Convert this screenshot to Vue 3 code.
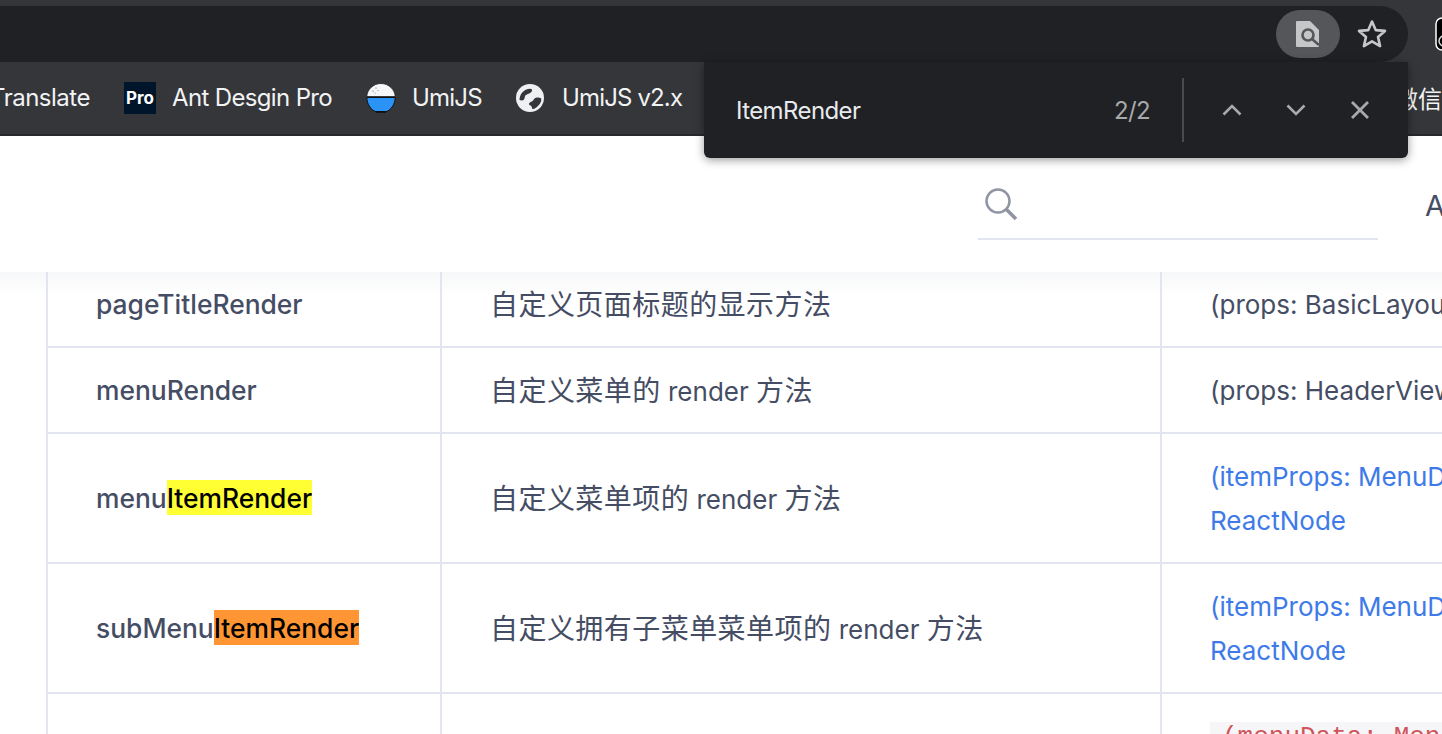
<template>
  <div class="page">
    <div class="tabstrip"></div>
    <div class="toolbar">
      <div class="omnibox">
        <div class="lens">
          <svg width="26" height="28" viewBox="0 0 26 28">
            <path d="M2 1h13l9 9v16a1 1 0 0 1-1 1H2a1 1 0 0 1-1-1V2a1 1 0 0 1 1-1z" fill="#c5c6c8" />
            <circle cx="13" cy="15" r="5.5" fill="none" stroke="#55565a" stroke-width="2.6" />
            <path d="M17 19l7 6" stroke="#55565a" stroke-width="2.6" />
          </svg>
        </div>
        <svg class="star" width="32" height="32" viewBox="0 0 32 32">
          <path d="M16 3.500l3.700 8.600 9.300.8-7 6.100 2.100 9.100-8.100-4.800-8.100 4.800 2.100-9.100-7-6.100 9.300-.8z" fill="none" stroke="#c6c7c9" stroke-width="2.600" stroke-linejoin="round" />
        </svg>
      </div>
      <svg class="ext" width="30" height="34" viewBox="0 0 30 34">
        <rect x="1" y="1" width="28" height="32" rx="6" fill="#000" stroke="#fff" stroke-width="1.500" />
        <circle cx="9" cy="24" r="5" fill="none" stroke="#d8d8d8" stroke-width="1.500" />
      </svg>
    </div>
    <div class="bookmarks">
      <span class="bm translate">Translate</span>
      <span class="bm pro-bm"><span class="pro">Pro</span>Ant Desgin Pro</span>
      <span class="bm umi-bm">
        <svg class="bm-icon" width="30" height="30" viewBox="0 0 30 30">
          <path d="M15 .5C7 .5 1 7 .8 13.500h28.400C29 7 23 .5 15 .5z" fill="#f6f7f8" stroke="#222" stroke-width=".8" />
          <circle cx="10" cy="5" r=".6" fill="#555" /><circle cx="7" cy="8" r=".6" fill="#555" /><circle cx="12" cy="7.500" r=".5" fill="#777" /><circle cx="9" cy="10" r=".5" fill="#777" />
          <path d="M.8 14.500h28.400c0 7-4.700 13-9.200 14.200h-10C5.500 27.500.8 21.500.8 14.500z" fill="#2b92f6" stroke="#111" stroke-width="1" />
          <path d="M10 28h10v1.800H10z" fill="#111" />
        </svg>UmiJS
      </span>
      <span class="bm v2-bm">
        <svg class="bm-icon" width="28" height="28" viewBox="0 0 28 28">
          <circle cx="14" cy="14" r="14" fill="#eff0f1" />
          <path d="M3.500 15.500C3.800 12 5 9.500 7 7.800 9 6 11.500 4.800 14 4.800c1.500 0 2.400.8 2 2-.4 1.500-1.700 2.400-3.500 3-1.500.5-3 1.100-3.500 2.400-.4 1.200-.3 2.600-1.200 3.500-1 1-3 1-4.800-.2z" fill="#35363a" />
          <path d="M13 19.500c.8-1.400 2.400-1.600 3.600-2.500 1.100-.9 1.500-2.500 2.700-3 1.800-.6 4.500-.5 5.700.3.600 1.200.2 3.300-.8 5-1 1.900-2.800 3.500-4.700 4.700-1.200.8-2.600 1.400-3.200.7-.6-.8-.4-2-1.100-2.700-.8-.8-2.700-1-2.200-2.500z" fill="#35363a" />
        </svg>UmiJS v2.x
      </span>
      <span class="bm wechat">微信</span>
    </div>
    <div class="divider"></div>
    <header class="site-header">
      <div class="search">
        <svg width="34" height="34" viewBox="0 0 34 34">
          <circle cx="13" cy="13" r="11.500" fill="none" stroke="#9095a3" stroke-width="2.500" />
          <path d="M21.500 21.500l9.500 9.500" stroke="#9095a3" stroke-width="3.500" />
        </svg>
      </div>
      <span class="nav-a">A</span>
    </header>
    <main class="content">
      <div class="fade"></div>
      <table class="props">
        <colgroup>
          <col class="c1" /><col class="c2" /><col class="c3" />
        </colgroup>
        <tbody>
          <tr class="short">
            <td class="name">pageTitleRender</td>
            <td><span class="cjk">自定义页面标题的显示方法</span></td>
            <td class="nowrap">(props: BasicLayoutProps) =&gt; string</td>
          </tr>
          <tr class="short">
            <td class="name">menuRender</td>
            <td><span class="cjk">自定义菜单的</span> render <span class="cjk">方法</span></td>
            <td class="nowrap">(props: HeaderViewProps) =&gt; ReactNode</td>
          </tr>
          <tr class="tall">
            <td class="name">menu<mark class="hit">ItemRender</mark></td>
            <td><span class="cjk">自定义菜单项的</span> render <span class="cjk">方法</span></td>
            <td class="link"><span class="nowrap">(itemProps: MenuDataItem) =&gt;</span><br />ReactNode</td>
          </tr>
          <tr class="tall">
            <td class="name">subMenu<mark class="hit current">ItemRender</mark></td>
            <td><span class="cjk">自定义拥有子菜单菜单项的</span> render <span class="cjk">方法</span></td>
            <td class="link"><span class="nowrap">(itemProps: MenuDataItem) =&gt;</span><br />ReactNode</td>
          </tr>
          <tr class="tall">
            <td></td>
            <td></td>
            <td class="code-cell"><code class="nowrap">(menuData: MenuDataItem[]) =&gt; MenuDataItem[]</code></td>
          </tr>
        </tbody>
      </table>
    </main>
    <div class="findbar">
      <span class="query">ItemRender</span>
      <span class="count">2/2</span>
      <span class="sep"></span>
      <svg class="find-btn" width="20" height="12" viewBox="0 0 20 12"><path d="M1.500 10.500L10 2l8.500 8.500" fill="none" stroke="#a8a9ab" stroke-width="2.600" /></svg>
      <svg class="find-btn" width="20" height="12" viewBox="0 0 20 12"><path d="M1.500 1.500L10 10l8.500-8.500" fill="none" stroke="#a8a9ab" stroke-width="2.600" /></svg>
      <svg class="find-btn" width="20" height="20" viewBox="0 0 20 20"><path d="M2 2l16 16M18 2L2 18" fill="none" stroke="#a8a9ab" stroke-width="2.800" /></svg>
    </div>
  </div>
</template>

<script setup>
</script>

<style>
html, body { margin: 0; background: #fff; overflow: hidden; }
</style>

<style scoped>
.page {
  position: relative;
  width: 1442px;
  height: 734px;
  overflow: hidden;
  background: #fff;
  font-family: Inter, "Noto Sans CJK SC", sans-serif;
  font-size: 26px;
  color: #454d64;
}
.tabstrip { height: 6px; background: #35363a; }
.toolbar {
  height: 56px;
  background: #35363a;
  display: flex;
}
.omnibox {
  flex: none;
  width: 1408px;
  height: 56px;
  background: #202124;
  border-radius: 0 28px 28px 0;
  display: flex;
  align-items: center;
  justify-content: flex-end;
  box-sizing: border-box;
  padding-right: 20px;
  gap: 16px;
}
.lens {
  width: 64px;
  height: 48px;
  border-radius: 24px;
  background: #55565a;
  display: flex;
  align-items: center;
  justify-content: center;
}
.star { display: block; }
.ext {
  flex: none;
  margin: 11px 0 0 27px;
}
.bookmarks {
  height: 72px;
  background: #35363a;
  color: #f1f3f4;
  display: flex;
  align-items: center;
  font-size: 24px;
  letter-spacing: -0.65px;
  white-space: nowrap;
}
.bm { display: flex; align-items: center; flex: none; margin-top: -2px; }
.translate { margin-left: -10px; width: 134px; letter-spacing: -0.5px; }
.pro-bm { width: 242px; }
.pro {
  width: 32px;
  height: 32px;
  margin-top: 2px;
  background: #001529;
  color: #fff;
  font-size: 17px;
  font-weight: 700;
  letter-spacing: 0;
  display: flex;
  align-items: center;
  justify-content: center;
  margin-right: 16px;
}
.umi-bm { width: 150px; letter-spacing: -0.8px; }
.bm-icon { margin-right: 18px; margin-top: 2px; }
.umi-bm .bm-icon { margin-right: 16px; }
.v2-bm { width: 878px; letter-spacing: -0.85px; }
.wechat { font-family: "Noto Sans CJK SC", sans-serif; letter-spacing: 0; }
.divider { height: 2px; background: #27282b; }
.site-header {
  position: relative;
  z-index: 2;
  height: 136px;
  background: #fff;
  display: flex;
  align-items: flex-start;
}
.search {
  flex: none;
  margin-left: 978px;
  width: 400px;
  height: 104px;
  box-sizing: border-box;
  border-bottom: 2px solid #e2e5f0;
  padding: 52px 0 0 7px;
}
.search svg { display: block; }
.nav-a { margin: 52px 0 0 47px; font-size: 29px; line-height: 36px; }
.content { position: relative; height: 462px; overflow: hidden; }
.fade {
  position: absolute;
  left: 0;
  right: 0;
  top: 0;
  height: 24px;
  background: linear-gradient(#f6f7f8, rgba(255, 255, 255, 0));
}
.props {
  position: relative;
  margin: -12px 0 0 46px;
  border-collapse: collapse;
  table-layout: fixed;
  width: 1500px;
}
.c1 { width: 394px; }
.c2 { width: 720px; }
.c3 { width: 386px; }
td {
  border: 2px solid #e2e5f0;
  padding: 2px 48px 0;
  line-height: 44px;
  vertical-align: middle;
}
.short td { height: 82px; }
.tall td { height: 126px; }
td.name { font-weight: 500; font-size: 26.4px; padding-top: 0; }
.cjk { font-size: 28px; letter-spacing: 0.45px; }
.nowrap { white-space: nowrap; }
.link { color: #3e7be9; }
.hit { background: #ffff33; color: #000; padding: 2px 0 1px; }
.hit.current { background: #ff9633; }
td.code-cell { vertical-align: top; padding-top: 19px; }
code {
  font-family: "Liberation Mono", monospace;
  font-size: 26px;
  color: #d0555a;
  background: #f6f6f8;
  padding: 0 12px;
}
.findbar {
  position: absolute;
  z-index: 3;
  left: 704px;
  top: 62px;
  width: 704px;
  height: 96px;
  background: #202124;
  border-radius: 0 0 6px 6px;
  box-shadow: 0 2px 10px rgba(0, 0, 0, 0.4);
  display: flex;
  align-items: center;
  box-sizing: border-box;
  padding: 0 38px 0 32px;
  color: #e8eaed;
  font-size: 24px;
  letter-spacing: -0.6px;
}
.query { width: 378px; }
.count { color: #a8a9ab; width: 68px; }
.sep { width: 2px; height: 64px; background: #4a4b4f; margin-right: 38px; }
.find-btn { margin-right: 44px; }
.find-btn:last-child { margin-right: 0; }
</style>
